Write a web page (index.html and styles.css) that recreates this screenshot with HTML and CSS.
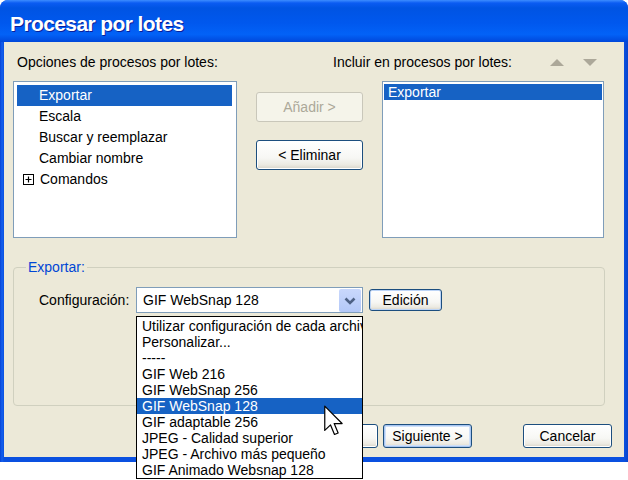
FILE: index.html
```html
<!DOCTYPE html>
<html lang="es">
<head>
    <meta charset="UTF-8">
    <title>Procesar por lotes</title>
    <link rel="stylesheet" href="styles.css">
</head>
<body>
    <div class="window">
        <div class="titlebar">Procesar por lotes</div>

        <div class="dialog">
            <!-- Column labels -->
            <div class="labels">
                <span class="label-left">Opciones de procesos por lotes:</span>
                <span class="label-right">Incluir en procesos por lotes:</span>
                <span class="order">
                    <span class="tri tri-up"></span>
                    <span class="tri tri-down"></span>
                </span>
            </div>

            <!-- Lists and add/remove buttons -->
            <div class="lists">
                <div class="listbox options">
                    <div class="row selected">Exportar</div>
                    <div class="row">Escala</div>
                    <div class="row">Buscar y reemplazar</div>
                    <div class="row">Cambiar nombre</div>
                    <div class="row tree">
                        <svg class="plus" width="11" height="11" viewBox="0 0 11 11">
                            <rect x="0.5" y="0.5" width="10" height="10" fill="#fff" stroke="#000"/>
                            <path d="M2.5 5.5h6M5.5 2.5v6" stroke="#000" stroke-width="1.2"/>
                        </svg>
                        Comandos
                    </div>
                </div>

                <div class="middle">
                    <button class="btn disabled">Añadir &gt;</button>
                    <button class="btn">&lt; Eliminar</button>
                </div>

                <div class="listbox included">
                    <div class="row selected">Exportar</div>
                </div>
            </div>

            <!-- Export settings -->
            <fieldset class="group">
                <legend>Exportar:</legend>
                <div class="config">
                    <span class="config-label">Configuración:</span>
                    <div class="combo">
                        <span class="combo-value">GIF WebSnap 128</span>
                        <span class="combo-arrow">
                            <svg width="22" height="23" viewBox="0 0 22 23">
                                <path d="M6.5 9.5l4.5 4.5 4.5-4.5" fill="none" stroke="#4D6185" stroke-width="2.6"/>
                            </svg>
                        </span>
                    </div>
                    <button class="btn small">Edición</button>
                </div>
            </fieldset>

            <!-- Dialog buttons -->
            <div class="actions">
                <button class="btn wide">&lt; Atrás</button>
                <button class="btn wide default">Siguiente &gt;</button>
                <button class="btn wide cancel">Cancelar</button>
            </div>
        </div>
    </div>

    <!-- Open drop-down of the combo box -->
    <div class="dropdown">
        <div class="item">Utilizar configuración de cada archivo</div>
        <div class="item">Personalizar...</div>
        <div class="item">-----</div>
        <div class="item">GIF Web 216</div>
        <div class="item">GIF WebSnap 256</div>
        <div class="item selected">GIF WebSnap 128</div>
        <div class="item">GIF adaptable 256</div>
        <div class="item">JPEG - Calidad superior</div>
        <div class="item">JPEG - Archivo más pequeño</div>
        <div class="item">GIF Animado Websnap 128</div>
    </div>

    <svg class="cursor" width="19" height="31" viewBox="0 0 12.5 20">
        <path d="M0.5 0.5v16l3.8-3.6 2.6 6.3 2.4-1-2.6-6.2h5.2z" fill="#fff" stroke="#000" stroke-width="0.8" stroke-linejoin="round"/>
    </svg>
</body>
</html>
```

FILE: styles.css
```css
body {
    margin: 0;
    background-color: #ffffff;
    font-family: "Liberation Sans", Arial, sans-serif;
    font-size: 14px;
    color: #000000;
    width: 628px;
    height: 480px;
    position: relative;
    overflow: hidden;
}

.window {
    width: 628px;
    height: 462px;
    border-radius: 8px 8px 0 0;
    background: linear-gradient(to right, #0842D4, #1360EE 2px, #0A50E0 4px, #0A50E0 624px, #0844CC);
    display: flex;
    flex-direction: column;
}

.titlebar {
    height: 42px;
    box-sizing: border-box;
    padding: 12px 0 0 10px;
    border-radius: 8px 8px 0 0;
    background: linear-gradient(to bottom, #3D8DFF 0, #0B5CF2 3px, #0054E3 8px, #0058EE 55%, #0262F7 82%, #0047DA 100%);
    color: #ffffff;
    font-size: 21px;
    font-weight: bold;
    letter-spacing: -0.6px;
    line-height: 24px;
    text-shadow: 1px 1px 0 #0A1F9A;
}

.dialog {
    margin: 0 4px 5px 4px;
    height: 415px;
    background-color: #ECE9D8;
    display: flex;
    flex-direction: column;
}

/* Labels above the lists */
.labels {
    display: flex;
    align-items: center;
    height: 16px;
    line-height: 16px;
    margin-top: 12px;
}

.label-left {
    width: 329px;
    padding-left: 13px;
    box-sizing: border-box;
}

.order {
    margin-left: auto;
    margin-right: 27px;
    display: flex;
    gap: 19px;
    align-items: center;
}

.tri {
    width: 0;
    height: 0;
    border-left: 7px solid transparent;
    border-right: 7px solid transparent;
}

.tri-up {
    border-bottom: 7px solid #ACA899;
}

.tri-down {
    border-top: 7px solid #ACA899;
}

/* Lists */
.lists {
    display: grid;
    grid-template-columns: 224px 107px 222px;
    column-gap: 19px;
    padding-left: 9px;
    margin-top: 11px;
    height: 157px;
}

.listbox {
    background-color: #ffffff;
    border: 1px solid #7F9DB9;
    box-sizing: border-box;
}

.options {
    padding: 3px 4px 3px 3px;
}

.options .row {
    height: 21px;
    line-height: 21px;
    padding-left: 22px;
}

.options .tree {
    padding-left: 6px;
    display: flex;
    align-items: center;
    gap: 6px;
}

.included {
    padding: 2px 1px;
}

.included .row {
    height: 16px;
    line-height: 16px;
    padding-left: 4px;
}

.row.selected,
.item.selected {
    background-color: #1662C4;
    color: #ffffff;
}

.middle {
    display: flex;
    flex-direction: column;
    gap: 18px;
    padding-top: 11px;
}

/* XP style buttons */
.btn {
    font-family: "Liberation Sans", Arial, sans-serif;
    font-size: 14px;
    color: #000000;
    height: 30px;
    border: 1px solid #1C4E7E;
    border-radius: 3px;
    background: linear-gradient(to bottom, #FFFFFF 0, #F7F7F4 60%, #ECEAE2 85%, #D8D4C8 100%);
    box-shadow: inset 0 0 0 1px #FFFFFF;
    padding: 0;
}

.btn.disabled {
    color: #ACA899;
    border-color: #C9C7BA;
    background: #F5F4EA;
    box-shadow: none;
}

.btn.small {
    width: 73px;
    height: 22px;
    margin-left: 6px;
    box-shadow: inset 0 0 0 1px #BCD4F6;
}

.btn.wide {
    width: 89px;
    height: 24px;
}

.btn.default {
    box-shadow: inset 0 0 0 1px #A8C6F2, inset 0 0 0 2px #CFE0F8;
}

/* Export group */
.group {
    margin: 21px 19px 0 9px;
    padding: 12px 12px 0 12px;
    height: 147px;
    box-sizing: border-box;
    border: 1px solid #D0D0BF;
    border-radius: 4px;
    min-width: 0;
}

.group legend {
    color: #0046D5;
    padding: 0 2px;
    line-height: 16px;
}

.config {
    display: flex;
    align-items: center;
}

.config-label {
    width: 110px;
    flex-shrink: 0;
    padding-left: 13px;
    box-sizing: border-box;
}

.combo {
    width: 227px;
    height: 26px;
    flex-shrink: 0;
    box-sizing: border-box;
    border: 1px solid #7F9DB9;
    background-color: #ffffff;
    display: flex;
    align-items: center;
    justify-content: space-between;
    padding: 0 1px 0 6px;
}

.combo-arrow {
    width: 22px;
    height: 23px;
    border-radius: 2px;
    background: linear-gradient(to bottom, #C9D8FC, #B3C8F8);
    display: flex;
}

/* Bottom buttons */
.actions {
    display: flex;
    justify-content: flex-end;
    margin-top: 18px;
    padding-right: 12px;
}

.actions .default {
    margin-left: 5px;
}

.actions .cancel {
    margin-left: 51px;
}

/* Drop-down list over the dialog */
.dropdown {
    position: absolute;
    left: 136px;
    top: 316px;
    width: 227px;
    height: 163px;
    box-sizing: border-box;
    border: 1px solid #000000;
    background-color: #ffffff;
    padding-top: 1px;
    overflow: hidden;
}

.item {
    height: 16px;
    line-height: 16px;
    padding-left: 5px;
    white-space: nowrap;
}

.cursor {
    position: absolute;
    left: 324px;
    top: 405px;
}
```
